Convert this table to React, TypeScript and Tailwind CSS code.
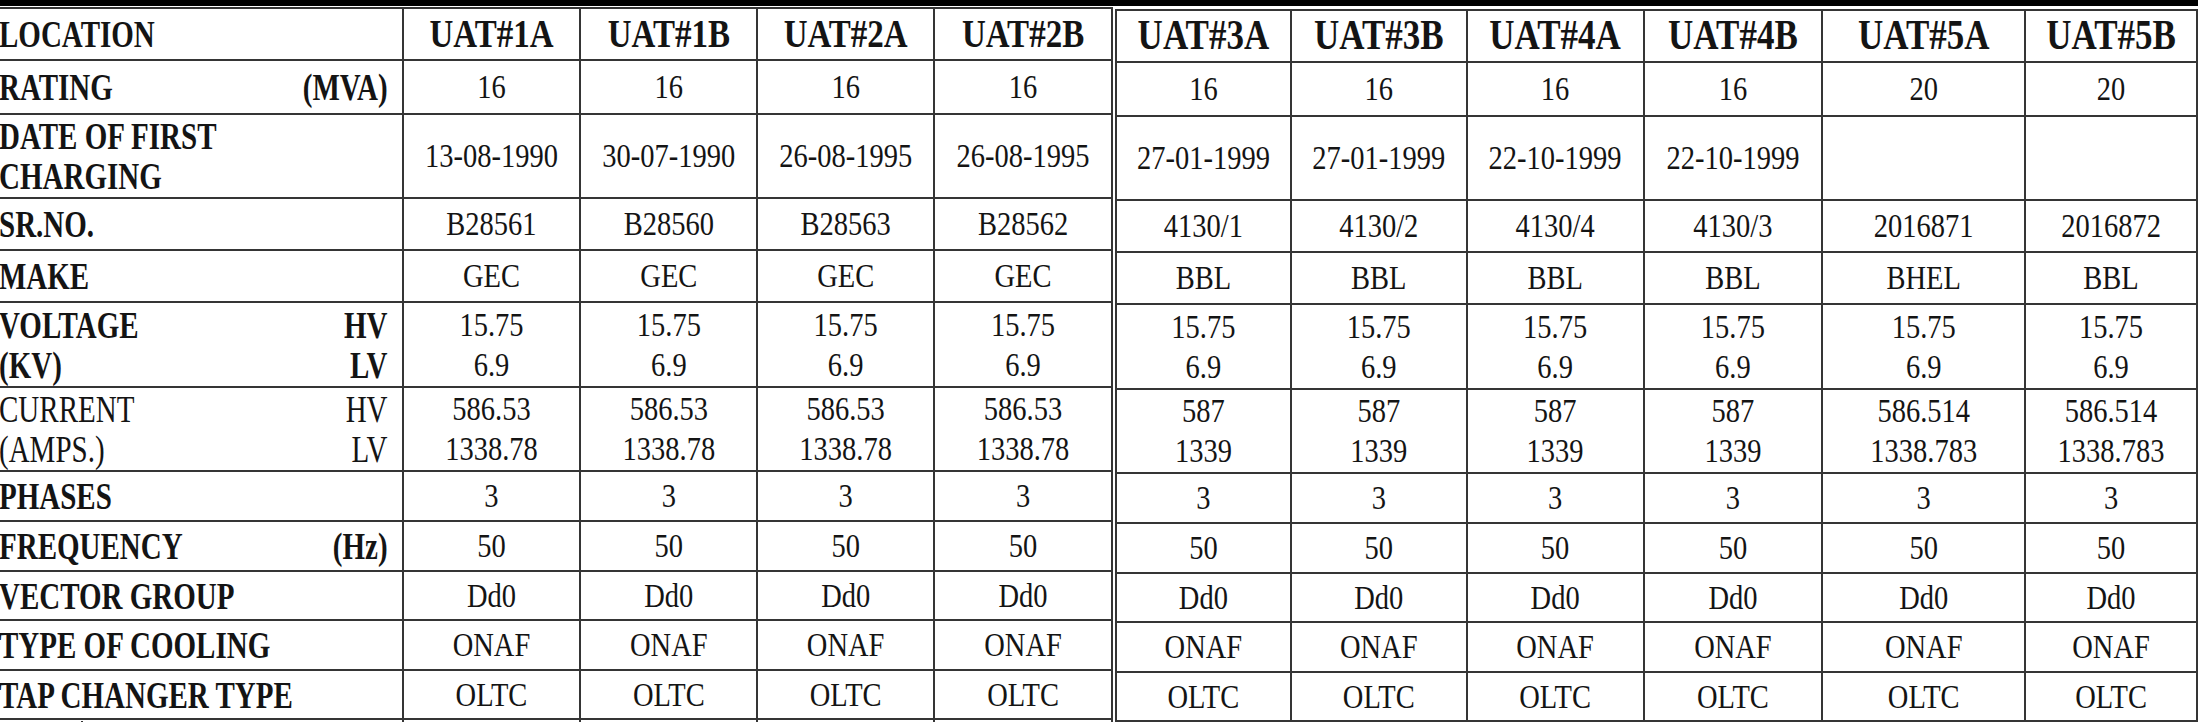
type Row = {
  label: string[];
  unit?: string[];
  bold?: boolean;
  h: string;
  vals: (string | string[])[];
};

const heads = ['UAT#1A', 'UAT#1B', 'UAT#2A', 'UAT#2B', 'UAT#3A', 'UAT#3B', 'UAT#4A', 'UAT#4B', 'UAT#5A', 'UAT#5B'];

const rows: Row[] = [
  { label: ['RATING'], unit: ['(MVA)'], bold: true, h: 'h-[54px]', vals: ['16', '16', '16', '16', '16', '16', '16', '16', '20', '20'] },
  {
    label: ['DATE OF FIRST', 'CHARGING'],
    bold: true,
    h: 'h-[84px]',
    vals: ['13-08-1990', '30-07-1990', '26-08-1995', '26-08-1995', '27-01-1999', '27-01-1999', '22-10-1999', '22-10-1999', '', ''],
  },
  { label: ['SR.NO.'], bold: true, h: 'h-[52px]', vals: ['B28561', 'B28560', 'B28563', 'B28562', '4130/1', '4130/2', '4130/4', '4130/3', '2016871', '2016872'] },
  { label: ['MAKE'], bold: true, h: 'h-[52px]', vals: ['GEC', 'GEC', 'GEC', 'GEC', 'BBL', 'BBL', 'BBL', 'BBL', 'BHEL', 'BBL'] },
  {
    label: ['VOLTAGE', '(KV)'],
    unit: ['HV', 'LV'],
    bold: true,
    h: 'h-[85px]',
    vals: Array(10).fill(['15.75', '6.9']),
  },
  {
    label: ['CURRENT', '(AMPS.)'],
    unit: ['HV', 'LV'],
    h: 'h-[84px]',
    vals: [
      ['586.53', '1338.78'], ['586.53', '1338.78'], ['586.53', '1338.78'], ['586.53', '1338.78'],
      ['587', '1339'], ['587', '1339'], ['587', '1339'], ['587', '1339'],
      ['586.514', '1338.783'], ['586.514', '1338.783'],
    ],
  },
  { label: ['PHASES'], bold: true, h: 'h-[50px]', vals: Array(10).fill('3') },
  { label: ['FREQUENCY'], unit: ['(Hz)'], bold: true, h: 'h-[50px]', vals: Array(10).fill('50') },
  { label: ['VECTOR GROUP'], bold: true, h: 'h-[49px]', vals: Array(10).fill('Dd0') },
  { label: ['TYPE OF COOLING'], bold: true, h: 'h-[50px]', vals: Array(10).fill('ONAF') },
  { label: ['TAP CHANGER TYPE'], bold: true, h: 'h-[49px]', vals: Array(10).fill('OLTC') },
];

const line = 'border-2 border-[#353535]';

// the scan is a touch taller than plain Times, so stretch each run of text vertically
function Txt({ children, tall }: { children: React.ReactNode; tall?: boolean }) {
  return <span className={`inline-block ${tall ? 'scale-y-[1.28]' : 'scale-y-[1.2]'}`}>{children}</span>;
}

function Value({ v }: { v: string | string[] }) {
  if (Array.isArray(v)) {
    return (
      <div className="flex flex-col items-center leading-[40px]">
        <Txt>{v[0]}</Txt>
        <Txt>{v[1]}</Txt>
      </div>
    );
  }
  return <Txt>{v}</Txt>;
}

function Label({ row }: { row: Row }) {
  const weight = row.bold ? 'font-bold' : 'font-normal';
  return (
    <div className={`flex justify-between pr-[14px] text-[29px] ${weight}`}>
      <div className="flex flex-col leading-[40px]">
        {row.label.map((l) => (
          <Txt key={l} tall>
            {l}
          </Txt>
        ))}
      </div>
      {row.unit && (
        <div className="flex flex-col items-end justify-center leading-[40px]">
          {row.unit.map((u) => (
            <Txt key={u} tall>
              {u}
            </Txt>
          ))}
        </div>
      )}
    </div>
  );
}

function Sheet({
  from,
  widths,
  withLabel,
  headSize,
}: {
  from: number;
  widths: string[];
  withLabel?: boolean;
  headSize: string;
}) {
  const idx = widths.map((_, i) => from + i);
  return (
    <table className="table-fixed border-collapse leading-[40px] text-[#141414]">
      <colgroup>
        {withLabel && <col className="w-[405px]" />}
        {widths.map((w, i) => (
          <col key={i} className={w} />
        ))}
      </colgroup>
      <tbody>
        <tr className="h-[52px]">
          {withLabel && (
            <td className={`${line} p-0 text-[29px] font-bold`}>
              <Txt tall>LOCATION</Txt>
            </td>
          )}
          {idx.map((i) => (
            <td key={i} className={`${line} p-0 text-center font-bold ${headSize}`}>
              <Txt>{heads[i]}</Txt>
            </td>
          ))}
        </tr>
        {rows.map((r) => (
          <tr key={r.label[0]} className={r.h}>
            {withLabel && (
              <td className={`${line} p-0`}>
                <Label row={r} />
              </td>
            )}
            {idx.map((i) => (
              <td key={i} className={`${line} p-0 text-center text-[28.5px]`}>
                <Value v={r.vals[i]} />
              </td>
            ))}
          </tr>
        ))}
        <tr className="h-[20px]">
          {withLabel && (
            <td className={`${line} p-0`}>
              <div className="h-[16px] w-[84px] border-r-2 border-[#353535]" />
            </td>
          )}
          {idx.map((i) => (
            <td key={i} className={`${line} p-0`} />
          ))}
        </tr>
      </tbody>
    </table>
  );
}

export default function App() {
  return (
    <div className="h-[722px] w-[2198px] overflow-hidden bg-white font-['Liberation_Serif','Times_New_Roman',serif]">
      <div className="h-[6px] bg-black" />
      <div className="flex items-start gap-[2px]">
        <div className="-ml-[3px] pt-[1px]">
          <Sheet
            from={0}
            withLabel
            headSize="text-[33px]"
            widths={['w-[178px]', 'w-[177px]', 'w-[177px]', 'w-[178px]']}
          />
        </div>
        <div className="pt-[3px]">
          <Sheet
            from={4}
            headSize="text-[35px]"
            widths={['w-[175px]', 'w-[176px]', 'w-[177px]', 'w-[179px]', 'w-[203px]', 'w-[172px]']}
          />
        </div>
      </div>
    </div>
  );
}
